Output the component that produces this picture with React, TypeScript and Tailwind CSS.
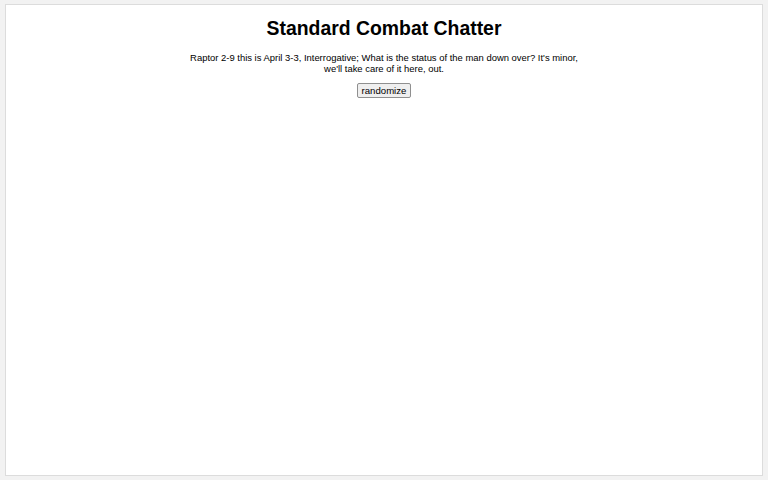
import React, { useState } from 'react';

const LINES = [
  "Raptor 2-9 this is April 3-3, Interrogative; What is the status of the man down over? It's minor, we'll take care of it here, out.",
];

export default function App() {
  const [line] = useState(LINES[0]);

  return (
    <div className="min-h-screen bg-[#f2f2f2] px-[5px] pt-[4px] pb-[4px] font-['Liberation_Sans',Arial,sans-serif] text-black">
      <div className="h-[472px] border border-[#dcdcdc] bg-white text-center">
        <h1 className="mt-[11px] text-[19.4px] font-bold leading-[24px]">Standard Combat Chatter</h1>
        <p className="mx-auto mt-[12px] max-w-[400px] text-[9.45px] leading-[11px]">{line}</p>
        <button className="mt-[9px] rounded-[2px] border border-[#8f8f8f] bg-[#efefef] px-[4px] text-[9.6px] leading-[13px]">
          randomize
        </button>
      </div>
    </div>
  );
}
